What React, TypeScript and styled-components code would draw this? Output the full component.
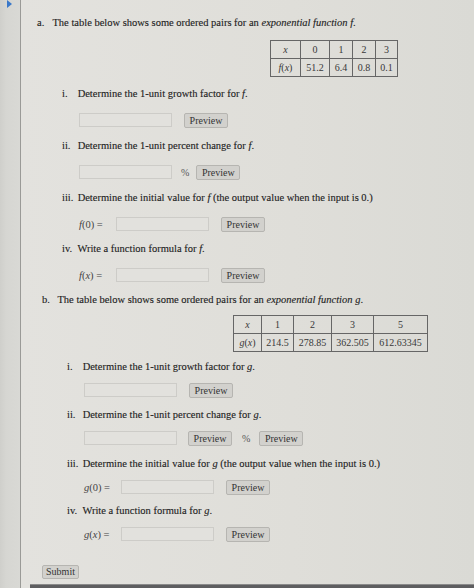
import React from "react";
import styled, { createGlobalStyle } from "styled-components";

const Global = createGlobalStyle`
  html, body { margin: 0; padding: 0; }
  body {
    width: 474px;
    height: 588px;
    overflow: hidden;
    background: #dfded9;
    font-family: "Liberation Serif", "Times New Roman", serif;
    color: #222;
  }
`;

const Page = styled.div`
  display: flex;
  width: 474px;
  height: 588px;
`;

const Sidebar = styled.div`
  position: relative;
  width: 20px;
  flex: none;
  background: linear-gradient(90deg, #cfcfcb 0px, #d6d6d2 6px, #d9d9d5 100%);
  border-right: 1px solid #9a9a97;
`;

const Marker = styled.div`
  position: absolute;
  left: 7px;
  top: 0;
  width: 0;
  height: 0;
  border-top: 4px solid transparent;
  border-bottom: 4px solid transparent;
  border-left: 5px solid #3a78c9;
`;

const Main = styled.div`
  flex: 1;
  display: flex;
  flex-direction: column;
  background: linear-gradient(90deg, #e3e2de 0%, #dfded9 60%, #dadad5 100%);
`;

const Content = styled.div`
  flex: 1;
  padding: 16px 0 0 16px;
`;

const Question = styled.section<{ $shift: number; $top: number; $gap: number }>`
  margin-left: ${(p) => p.$shift}px;
  margin-top: ${(p) => p.$top}px;
  display: flex;
  flex-direction: column;
  --row-gap: ${(p) => p.$gap}px;
`;

const Line = styled.div`
  font-size: 10.5px;
  line-height: 14px;
  white-space: nowrap;
  -webkit-text-stroke: 0.12px #222;
`;

const Lbl = styled.span`
  display: inline-block;
  min-width: 13px;
`;

const I = styled.i`
  font-style: italic;
`;

const TableWrap = styled.div<{ $left: number; $top: number }>`
  margin: ${(p) => p.$top}px 0 0 ${(p) => p.$left}px;
`;

const Table = styled.table`
  border-collapse: collapse;
  border: 1px solid #666;
  font-size: 10px;
`;

const Cell = styled.td<{ $w: number }>`
  width: ${(p) => p.$w - 1}px;
  height: 17px;
  padding: 0;
  border: 1px solid #666;
  text-align: center;
  white-space: nowrap;
  color: #383838;
`;

const SubPart = styled.div<{ $top: number }>`
  margin: ${(p) => p.$top}px 0 0 25px;
  display: flex;
  flex-direction: column;
  gap: var(--row-gap);
`;

const Row = styled.div`
  display: flex;
  align-items: center;
  height: 16px;
  padding-left: 17px;
`;

const MathLabel = styled.span`
  width: 37px;
  font-size: 10.5px;
  color: #444;
  white-space: nowrap;
`;

const Input = styled.div`
  width: 91px;
  height: 12px;
  border: 1px solid #cdccc8;
  background: #e2e1dd;
`;

const Button = styled.button<{ $ml: number }>`
  margin-left: ${(p) => p.$ml}px;
  width: 44px;
  height: 15px;
  padding: 0;
  font-family: "Liberation Serif", "Times New Roman", serif;
  font-size: 10px;
  line-height: 13px;
  color: #333;
  background: #d2d1cd;
  border: 1px solid #b6b5b1;
  border-radius: 2px;
`;

const Pct = styled.span<{ $ml: number }>`
  margin-left: ${(p) => p.$ml}px;
  font-size: 10px;
  color: #555;
`;

const SubmitRow = styled.div`
  margin: 19px 0 0 5px;
`;

const Submit = styled.button`
  width: 37px;
  height: 14px;
  padding: 0;
  font-family: "Liberation Serif", "Times New Roman", serif;
  font-size: 10px;
  line-height: 12px;
  color: #333;
  background: #d2d1cd;
  border: 1px solid #b6b5b1;
  border-radius: 2px;
`;

const BottomBar = styled.div`
  height: 3px;
  margin-left: 9px;
  background: #5e5e60;
  border-top: 1px solid #8a8a8a;
`;

type Part = {
  num: string;
  text: React.ReactNode;
  top: number;
  kind: "plain" | "pct" | "pct2" | "label";
  label?: React.ReactNode;
};

function Answer({ p }: { p: Part }) {
  if (p.kind === "label") {
    return (
      <Row>
        <MathLabel>{p.label}</MathLabel>
        <Input />
        <Button $ml={12}>Preview</Button>
      </Row>
    );
  }
  if (p.kind === "pct") {
    return (
      <Row>
        <Input />
        <Pct $ml={9}>%</Pct>
        <Button $ml={7}>Preview</Button>
      </Row>
    );
  }
  if (p.kind === "pct2") {
    return (
      <Row>
        <Input />
        <Button $ml={11}>Preview</Button>
        <Pct $ml={10}>%</Pct>
        <Button $ml={9}>Preview</Button>
      </Row>
    );
  }
  return (
    <Row>
      <Input />
      <Button $ml={12}>Preview</Button>
    </Row>
  );
}

function partsFor(fn: string, pctKind: "pct" | "pct2", tops: number[]): Part[] {
  const F = <I>{fn}</I>;
  return [
    { num: "i.", text: <>Determine the 1-unit growth factor for {F}.</>, top: tops[0], kind: "plain" },
    { num: "ii.", text: <>Determine the 1-unit percent change for {F}.</>, top: tops[1], kind: pctKind },
    {
      num: "iii.",
      text: <>Determine the initial value for {F} (the output value when the input is 0.)</>,
      top: tops[2],
      kind: "label",
      label: <><I>{fn}</I>(0) =</>,
    },
    {
      num: "iv.",
      text: <>Write a function formula for {F}.</>,
      top: tops[3],
      kind: "label",
      label: <><I>{fn}</I>(<I>x</I>) =</>,
    },
  ];
}

function Q({
  letter,
  fn,
  shift,
  top,
  gap,
  tableLeft,
  tableTop,
  xs,
  ys,
  widths,
  pctKind,
  tops,
}: {
  letter: string;
  fn: string;
  shift: number;
  top: number;
  gap: number;
  tableLeft: number;
  tableTop: number;
  xs: string[];
  ys: string[];
  widths: number[];
  pctKind: "pct" | "pct2";
  tops: number[];
}) {
  return (
    <Question $shift={shift} $top={top} $gap={gap}>
      <Line>
        <Lbl>{letter}.</Lbl> The table below shows some ordered pairs for an{" "}
        <I>exponential function {fn}</I>.
      </Line>
      <TableWrap $left={tableLeft} $top={tableTop}>
        <Table>
          <tbody>
            <tr>
              <Cell $w={widths[0]}>
                <I>x</I>
              </Cell>
              {xs.map((x, i) => (
                <Cell key={i} $w={widths[i + 1]}>
                  {x}
                </Cell>
              ))}
            </tr>
            <tr>
              <Cell $w={widths[0]}>
                <I>{fn}</I>(<I>x</I>)
              </Cell>
              {ys.map((y, i) => (
                <Cell key={i} $w={widths[i + 1]}>
                  {y}
                </Cell>
              ))}
            </tr>
          </tbody>
        </Table>
      </TableWrap>
      {partsFor(fn, pctKind, tops).map((p) => (
        <SubPart key={p.num} $top={p.top}>
          <Line>
            <Lbl>{p.num}</Lbl> {p.text}
          </Line>
          <Answer p={p} />
        </SubPart>
      ))}
    </Question>
  );
}

export default function App() {
  return (
    <>
      <Global />
      <Page>
        <Sidebar>
          <Marker />
        </Sidebar>
        <Main>
          <Content>
            <Q
              letter="a"
              fn="f"
              shift={0}
              top={0}
              gap={11}
              tableLeft={233}
              tableTop={10}
              xs={["0", "1", "2", "3"]}
              ys={["51.2", "6.4", "0.8", "0.1"]}
              widths={[30, 29, 23, 23, 22]}
              pctKind="pct"
              tops={[10, 11, 11, 10]}
            />
            <Q
              letter="b"
              fn="g"
              shift={5}
              top={10}
              gap={8}
              tableLeft={191}
              tableTop={8}
              xs={["1", "2", "3", "5"]}
              ys={["214.5", "278.85", "362.505", "612.63345"]}
              widths={[28, 32, 38, 42, 54]}
              pctKind="pct2"
              tops={[8, 10, 11, 9]}
            />
            <SubmitRow>
              <Submit>Submit</Submit>
            </SubmitRow>
          </Content>
          <BottomBar />
        </Main>
      </Page>
    </>
  );
}
